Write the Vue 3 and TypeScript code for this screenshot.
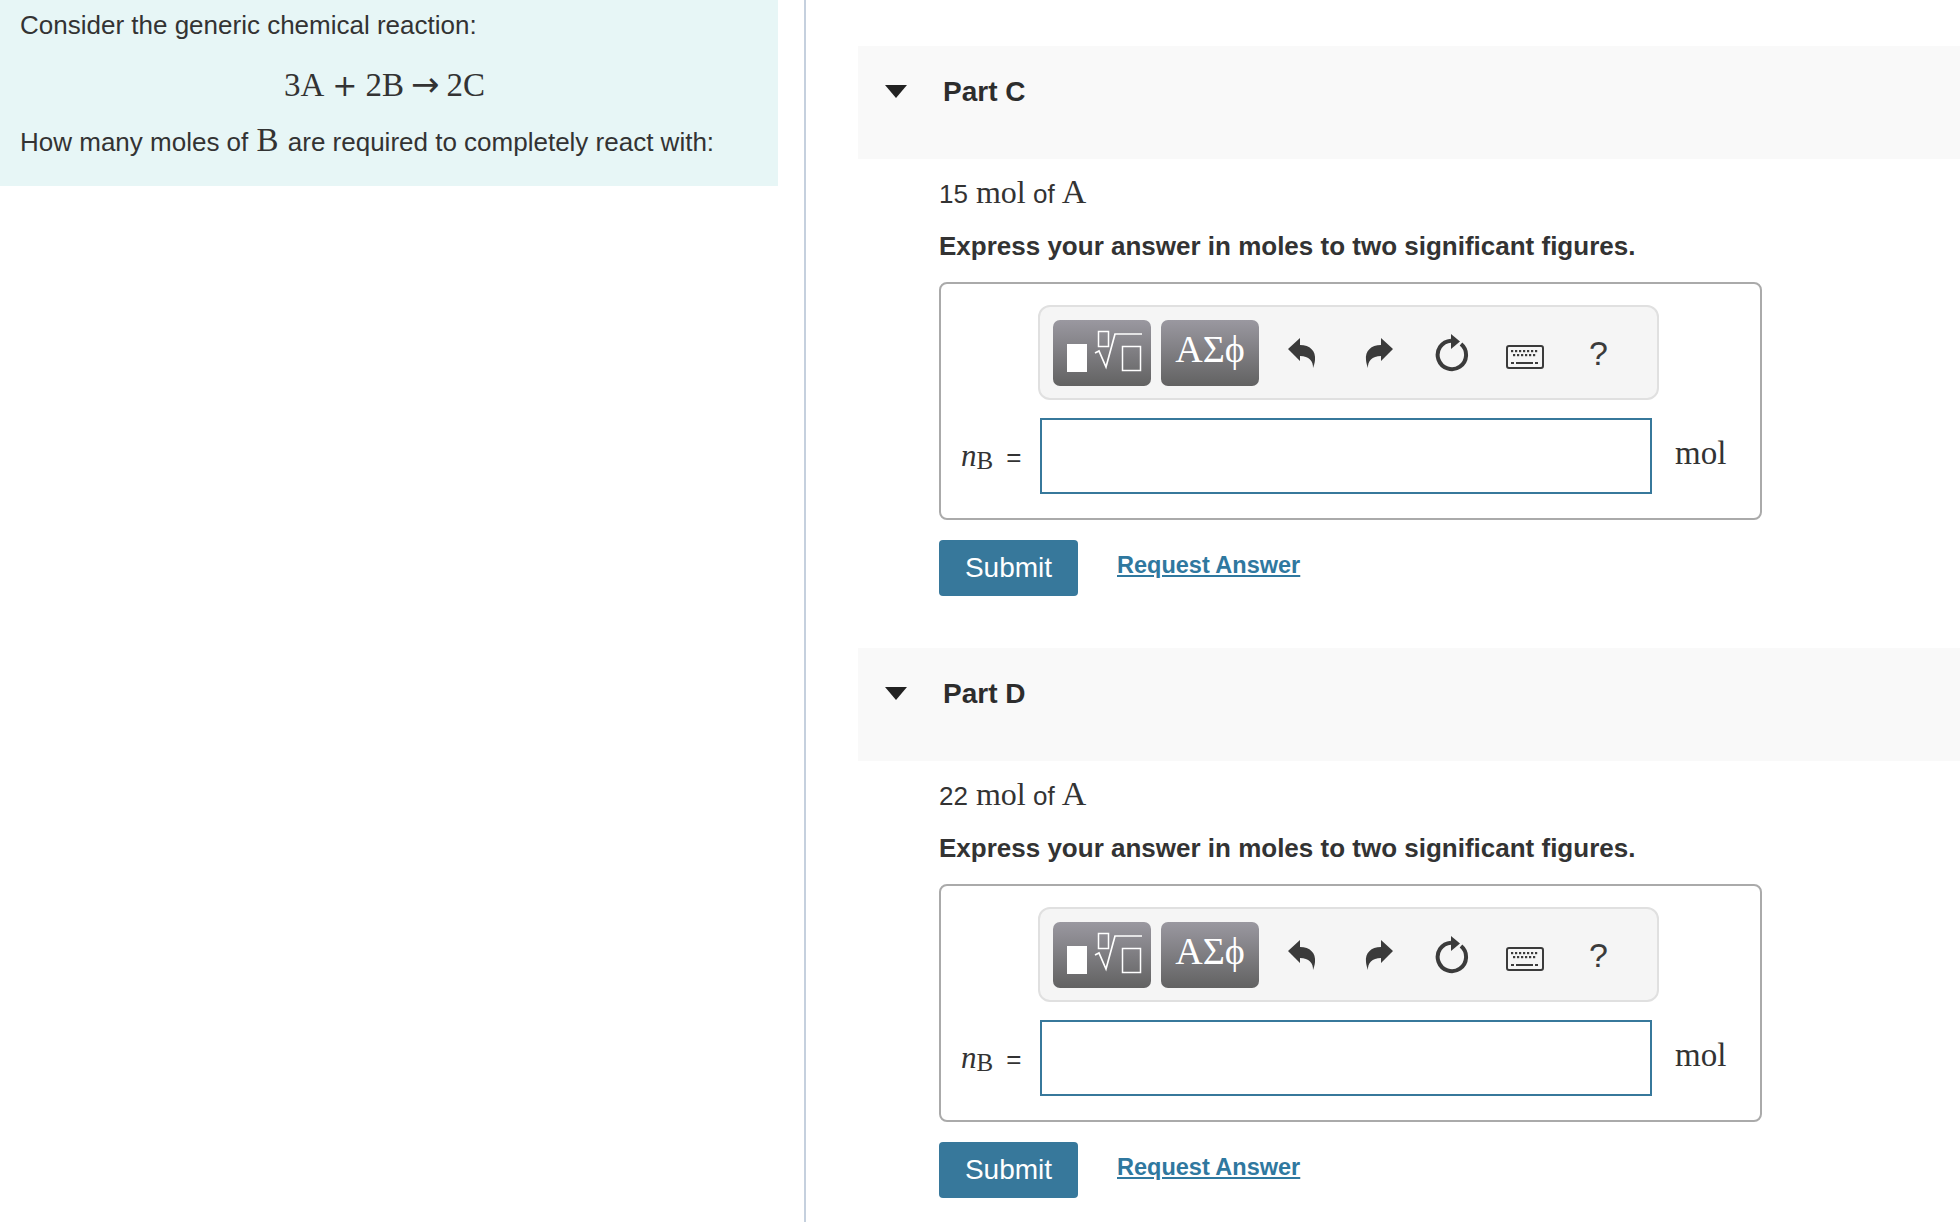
<script setup lang="ts">
interface Part {
  name: string;
  amount: string;
}

const parts: Part[] = [
  { name: 'Part C', amount: '15' },
  { name: 'Part D', amount: '22' },
];

const keyRows = [
  [5, 9, 13, 17, 21, 25, 29],
  [7, 11, 15, 19, 23, 27],
];
</script>

<template>
  <div class="page">
    <aside class="left">
      <div class="intro">
        <p class="line">Consider the generic chemical reaction:</p>
        <p class="equation">3A<span class="op">+</span>2B<span class="op arrow">→</span>2C</p>
        <p class="line">How many moles of <span class="math-b">B</span> are required to completely react with:</p>
      </div>
    </aside>

    <main class="right">
      <section v-for="part in parts" :key="part.name" class="part">
        <header class="part-head">
          <span class="caret"></span>
          <h2>{{ part.name }}</h2>
        </header>
        <div class="part-body">
          <p class="amount">{{ part.amount }}<span class="serif"> mol</span> of <span class="serif big">A</span></p>
          <p class="instruction">Express your answer in moles to two significant figures.</p>

          <div class="answer-box">
            <div class="toolbar">
              <button class="tool-btn templates" type="button">
                <svg width="98" height="66" viewBox="0 0 98 66">
                  <rect x="14" y="24" width="20" height="28" fill="#fff" />
                  <rect x="45.500" y="11.500" width="10" height="15" fill="none" stroke="#fff" stroke-width="1.500" />
                  <path d="M42 33l4-2 7 16 9-33h27" fill="none" stroke="#fff" stroke-width="1.700" />
                  <rect x="69.500" y="26.500" width="18" height="24" fill="none" stroke="#fff" stroke-width="1.500" />
                </svg>
              </button>
              <button class="tool-btn symbols" type="button">ΑΣϕ</button>
              <div class="tool-icons">
                <svg class="ic" width="30" height="34" viewBox="0 0 30 34">
                  <path d="M1 13L13 2v7c10 0 16 6 15 15-.2 2.500-1 5.500-2 8 .4-7-4-12-13-12v5z" fill="#3b3b3b" />
                </svg>
                <svg class="ic" width="30" height="34" viewBox="0 0 30 34">
                  <path d="M29 13L17 2v7C7 9 1 15 2 24c.2 2.500 1 5.500 2 8-.4-7 4-12 13-12v5z" fill="#3b3b3b" />
                </svg>
                <svg class="ic" width="36" height="38" viewBox="0 0 36 38">
                  <path d="M27 10a14.200 14.200 0 1 1-10-3.300" fill="none" stroke="#3b3b3b" stroke-width="4" />
                  <path d="M17 0l9 7.500-9 7.500z" fill="#3b3b3b" />
                </svg>
                <svg class="ic" width="38" height="24" viewBox="0 0 38 24">
                  <rect x="1" y="1" width="36" height="22" rx="2" fill="none" stroke="#3b3b3b" stroke-width="2" />
                  <g v-for="(row, i) in keyRows" :key="i">
                    <rect v-for="x in row" :key="x" :x="x" :y="5 + i * 4" width="2.200" height="2.200" fill="#3b3b3b" />
                  </g>
                  <rect x="5" y="17" width="3" height="2" fill="#3b3b3b" />
                  <rect x="10" y="17" width="17" height="2" fill="#3b3b3b" />
                  <rect x="29" y="17" width="3" height="2" fill="#3b3b3b" />
                </svg>
                <span class="help">?</span>
              </div>
            </div>

            <div class="answer-row">
              <span class="symbol"><i>n</i><sub>B</sub><span class="equals">=</span></span>
              <div class="answer-input"></div>
              <span class="unit">mol</span>
            </div>
          </div>

          <div class="actions">
            <button class="submit" type="button">Submit</button>
            <a class="request" href="#">Request Answer</a>
          </div>
        </div>
      </section>
    </main>
  </div>
</template>

<style>
html,
body {
  background: #fff;
  overflow: hidden;
}
</style>

<style scoped>
.page {
  display: flex;
  width: 1960px;
  height: 1222px;
  overflow: hidden;
  font-family: "Liberation Sans", Arial, sans-serif;
  color: #333;
}

.left {
  flex: 0 0 806px;
  box-sizing: border-box;
  border-right: 2px solid #c5d0de;
}

.intro {
  box-sizing: border-box;
  width: 778px;
  height: 186px;
  padding: 10px 20px 0;
  background: #e7f6f6;
  font-size: 26px;
}

.line {
  margin: 0;
  line-height: 30px;
}

.equation {
  margin: 26px 0 23px;
  padding-left: 283px;
  font-family: "Liberation Serif", serif;
  font-size: 33px;
  line-height: 36px;
  margin-left: -19px;
}

.op {
  margin: 0 8px;
  font-family: "DejaVu Sans", sans-serif;
  font-size: 30px;
}

.arrow {
  margin: 0 7px;
  font-size: 34px;
}

.math-b {
  margin: 0 2px 0 1px;
  font-family: "Liberation Serif", serif;
  font-size: 33px;
  line-height: 0;
}

.right {
  flex: 1;
  padding: 46px 0 0 52px;
}

.part {
  margin-bottom: 52px;
}

.part-head {
  display: flex;
  align-items: flex-start;
  height: 113px;
  background: #f9f9f9;
}

.caret {
  width: 0;
  height: 0;
  margin: 39px 0 0 27px;
  border-left: 11px solid transparent;
  border-right: 11px solid transparent;
  border-top: 13px solid #222;
}

.part-head h2 {
  margin: 29px 0 0 36px;
  font-size: 28px;
  line-height: 34px;
  font-weight: 700;
  color: #2d2d2d;
}

.part-body {
  width: 823px;
  margin-left: 81px;
}

.amount {
  margin: 17px 0 0;
  font-size: 26px;
  line-height: 36px;
}

.serif {
  font-family: "Liberation Serif", serif;
  font-size: 32px;
  line-height: 0;
}

.big {
  font-size: 34px;
}

.instruction {
  margin: 18px 0 0;
  font-size: 26px;
  line-height: 32px;
  font-weight: 700;
}

.answer-box {
  box-sizing: border-box;
  height: 238px;
  margin-top: 20px;
  padding: 21px 0 0 97px;
  border: 2px solid #aaa;
  border-radius: 8px;
}

.toolbar {
  display: flex;
  align-items: center;
  box-sizing: border-box;
  width: 621px;
  height: 95px;
  padding-left: 13px;
  background: #f5f5f5;
  border: 2px solid #e0e0e0;
  border-radius: 12px;
}

.tool-btn {
  height: 66px;
  padding: 0;
  border: 0;
  border-radius: 7px;
  background: linear-gradient(#9a98a0, #626262);
  color: #fff;
}

.templates {
  width: 98px;
  margin-right: 10px;
}

.templates svg {
  display: block;
}

.symbols {
  width: 98px;
  padding-bottom: 7px;
  font-family: "Liberation Serif", serif;
  font-size: 38px;
}

.tool-icons {
  display: flex;
  align-items: center;
  margin-left: 28px;
}

.ic {
  display: block;
}

.ic:nth-child(1) {
  margin-right: 47px;
}

.ic:nth-child(2) {
  margin-right: 43px;
}

.ic:nth-child(3) {
  margin: 0 36px 0 -3px;
}

.ic:nth-child(4) {
  margin-top: 8px;
}

.help {
  margin-left: 45px;
  font-size: 34px;
  line-height: 40px;
  color: #3b3b3b;
}

.answer-row {
  display: flex;
  align-items: center;
  margin-top: 18px;
}

.symbol {
  width: 60px;
  margin-left: -77px;
  margin-right: 19px;
  flex: 0 0 auto;
  font-family: "Liberation Serif", serif;
  font-size: 31px;
  line-height: 36px;
  white-space: nowrap;
}

.symbol sub {
  font-size: 25px;
  line-height: 0;
  vertical-align: -3px;
}

.equals {
  margin-left: 13px;
  font-family: "Liberation Sans", sans-serif;
  font-size: 26px;
}

.answer-input {
  box-sizing: border-box;
  width: 612px;
  height: 76px;
  background: #fff;
  border: 2px solid #37789b;
}

.unit {
  margin: -6px 0 0 23px;
  font-family: "Liberation Serif", serif;
  font-size: 33px;
}

.actions {
  display: flex;
  align-items: center;
  margin-top: 20px;
}

.submit {
  width: 139px;
  height: 56px;
  padding: 0;
  border: 0;
  border-radius: 4px;
  background: #37789b;
  color: #fff;
  font-family: inherit;
  font-size: 28px;
}

.request {
  margin: -5px 0 0 39px;
  color: #2f789f;
  font-size: 23.500px;
  font-weight: 700;
}
</style>
